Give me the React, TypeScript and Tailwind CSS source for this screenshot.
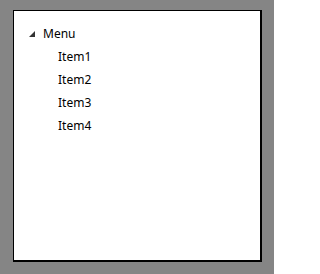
export default function App() {
  const items = ["Item1", "Item2", "Item3", "Item4"];
  return (
    <div className="w-[274px] h-[274px] bg-[#858585] pl-[13px] pt-[10px] font-['Noto_Sans',sans-serif] text-[12px] text-black">
      <div className="w-[249px] h-[252px] bg-white border-l border-t border-r-2 border-b-2 border-black pt-[11px]">
        <div className="h-[23px] flex items-center pl-[15px]">
          <svg width="6" height="6" viewBox="0 0 6 6" className="mr-[8px]">
            <polygon points="6,0 6,6 0,6" fill="#333" />
          </svg>
          <span>Menu</span>
        </div>
        {items.map((item) => (
          <div key={item} className="h-[23px] flex items-center pl-[44px]">
            {item}
          </div>
        ))}
      </div>
    </div>
  );
}
